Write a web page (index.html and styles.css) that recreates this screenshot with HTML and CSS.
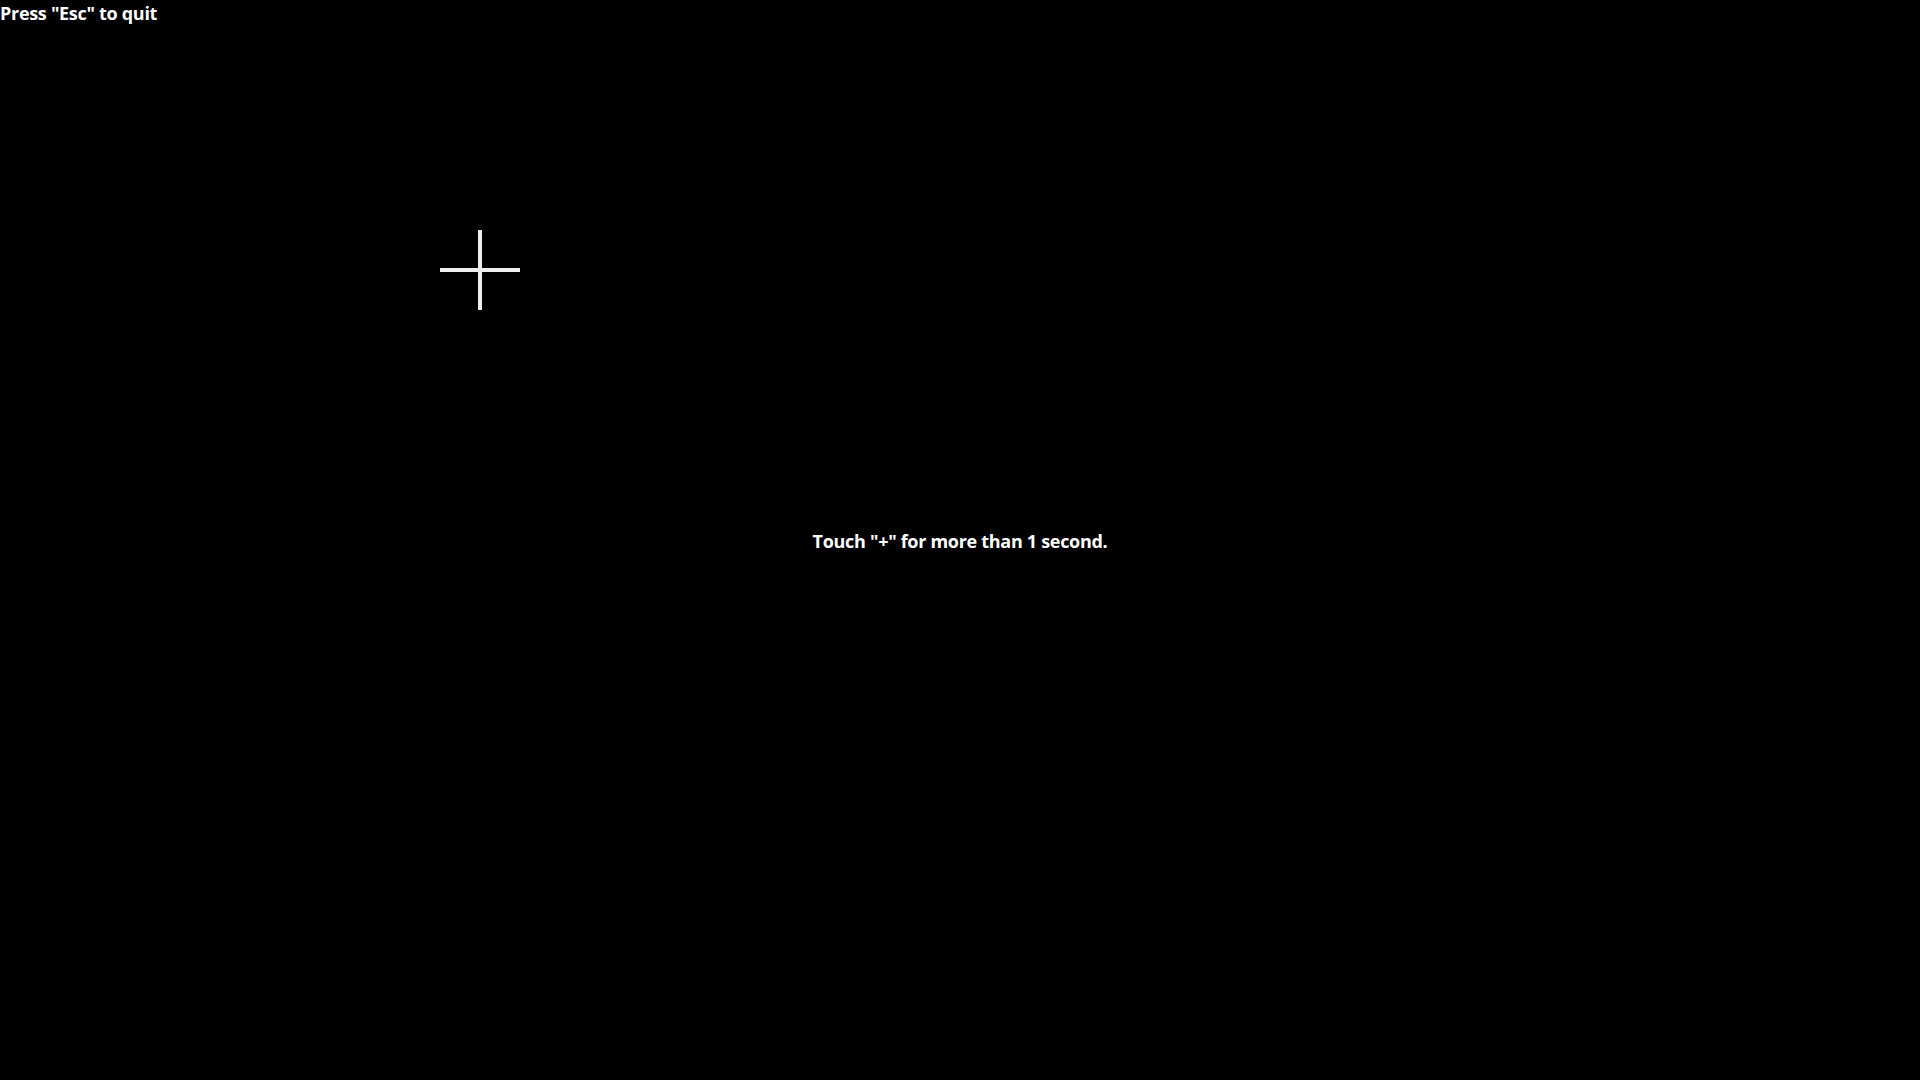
FILE: index.html
```html
<!DOCTYPE html>
<html lang="en">
<head>
<meta charset="utf-8">
<title>Touch calibration</title>
<link rel="stylesheet" href="styles.css">
</head>
<body>
<div class="screen">
  <div class="quit">Press "Esc" to quit</div>
  <div class="target" aria-hidden="true"><span class="bar-h"></span><span class="bar-v"></span></div>
  <div class="message">Touch "+" for more than 1 second.</div>
</div>
</body>
</html>
```
FILE: styles.css
```css
html, body {
  margin: 0;
  padding: 0;
  background: #000;
  height: 100%;
  overflow: hidden;
}
.screen {
  position: relative;
  width: 1920px;
  height: 1080px;
  background: #000;
  color: #fff;
  font-family: "Open Sans", "DejaVu Sans", sans-serif;
  font-weight: 700;
  display: flex;
  align-items: center;
  justify-content: center;
}
.quit {
  position: absolute;
  left: 0;
  top: 2px;
  font-size: 18px;
  line-height: 22px;
  letter-spacing: -0.3px;
}
.message {
  font-size: 18px;
  line-height: 24px;
  letter-spacing: -0.3px;
  margin-top: 2px;
}
.target {
  position: absolute;
  left: 440px;
  top: 230px;
  width: 80px;
  height: 80px;
}
.bar-h, .bar-v {
  position: absolute;
  background: #eee;
}
.bar-h {
  left: 0;
  top: 38px;
  width: 80px;
  height: 4px;
}
.bar-v {
  left: 38px;
  top: 0;
  width: 4px;
  height: 80px;
}
```
